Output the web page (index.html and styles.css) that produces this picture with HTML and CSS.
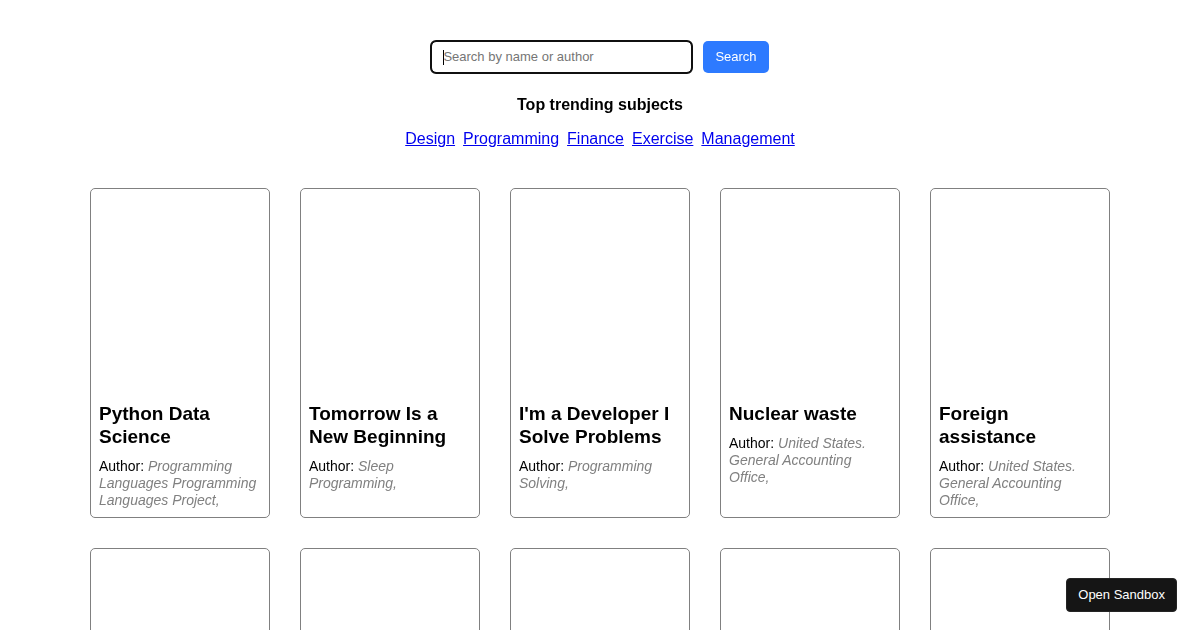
FILE: index.html
```html
<!DOCTYPE html>
<html lang="en">
<head>
  <meta charset="UTF-8">
  <meta name="viewport" content="width=device-width, initial-scale=1.0">
  <title>Book Search</title>
  <link rel="stylesheet" href="styles.css">
</head>
<body>
  <main class="container">
    <form class="search-form">
      <input type="text" class="search-input" placeholder="Search by name or author" aria-label="Search by name or author" autofocus>
      <button type="submit" class="search-btn">Search</button>
    </form>

    <section class="trending">
      <h2>Top trending subjects</h2>
      <nav class="subjects">
        <a href="#design">Design</a>
        <a href="#programming">Programming</a>
        <a href="#finance">Finance</a>
        <a href="#exercise">Exercise</a>
        <a href="#management">Management</a>
      </nav>
    </section>

    <section class="books">
      <article class="book">
        <div class="cover"></div>
        <h3>Python Data Science</h3>
        <p>Author: <em>Programming Languages Programming Languages Project,</em></p>
      </article>
      <article class="book">
        <div class="cover"></div>
        <h3>Tomorrow Is a New Beginning</h3>
        <p>Author: <em>Sleep Programming,</em></p>
      </article>
      <article class="book">
        <div class="cover"></div>
        <h3>I'm a Developer I Solve Problems</h3>
        <p>Author: <em>Programming Solving,</em></p>
      </article>
      <article class="book">
        <div class="cover"></div>
        <h3>Nuclear waste</h3>
        <p>Author: <em>United States. General Accounting Office,</em></p>
      </article>
      <article class="book">
        <div class="cover"></div>
        <h3>Foreign assistance</h3>
        <p>Author: <em>United States. General Accounting Office,</em></p>
      </article>
      <article class="book"><div class="cover"></div></article>
      <article class="book"><div class="cover"></div></article>
      <article class="book"><div class="cover"></div></article>
      <article class="book"><div class="cover"></div></article>
      <article class="book"><div class="cover"></div></article>
    </section>
  </main>

  <button type="button" class="sandbox-btn">Open Sandbox</button>
</body>
</html>
```

FILE: styles.css
```css
* {
  box-sizing: border-box;
}

body {
  margin: 0;
  background-color: #fff;
  color: #000;
  font-family: "Liberation Sans", Arial, sans-serif;
  font-size: 16px;
  scrollbar-width: none;
}

.container {
  padding: 41px 20px 30px;
}

.search-form {
  display: flex;
  justify-content: center;
  gap: 11px;
}

.search-input,
.search-btn {
  height: 32px;
  padding: 0 12px 2px;
  border-radius: 5px;
  font-family: "Liberation Sans", Arial, sans-serif;
  font-size: 13px;
}

.search-input {
  width: 261px;
  padding: 0 11px 2px;
  border: 1px solid #808080;
}

.search-input:focus {
  border-color: #101010;
  outline: 2px solid #101010;
  outline-offset: -1px;
  caret-color: transparent;
  background: linear-gradient(#000, #000) 11px 8px / 1px 15px no-repeat;
}

.search-btn {
  border: none;
  background-color: #2d7aff;
  color: #fff;
}

.trending {
  text-align: center;
}

.trending h2 {
  margin: 23px 0 16px;
  font-size: 16px;
  line-height: 18px;
}

.subjects {
  display: flex;
  justify-content: center;
  gap: 8px;
  line-height: 18px;
}

.subjects a {
  color: #0000ee;
}

.books {
  display: grid;
  grid-template-columns: repeat(auto-fit, 180px);
  justify-content: center;
  gap: 30px;
  max-width: 1020px;
  margin: 40px auto 0;
}

.book {
  padding: 8px;
  border: 1px solid #808080;
  border-radius: 5px;
}

.cover {
  height: 200px;
}

.book h3 {
  margin: 5px 0 10px;
  font-size: 19px;
  line-height: 23px;
}

.book p {
  margin: 0;
  font-size: 14px;
  line-height: 17px;
}

.book em {
  color: #808080;
}

.sandbox-btn {
  position: fixed;
  right: 23px;
  bottom: 18px;
  height: 34px;
  padding: 0 11px 2px;
  border: 1px solid #242424;
  border-radius: 4px;
  background-color: #151515;
  color: #fff;
  font-family: "Liberation Sans", Arial, sans-serif;
  font-size: 13px;
}
```
